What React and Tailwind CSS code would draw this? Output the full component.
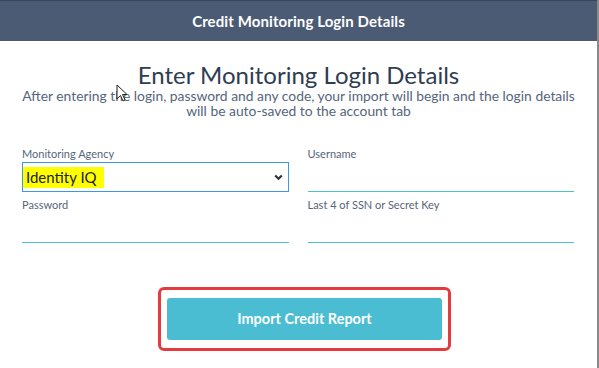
import React from "react";

export default function App() {
  return (
    <div className="w-[599px] h-[368px] bg-[#8a8a8a] overflow-hidden" style={{ fontFamily: "Lato, 'Noto Sans', sans-serif" }}>
      <div className="relative w-[597px] h-[368px] bg-white">
        <div className="h-[41px] bg-[#4a5b73] border-t border-[#3a4658] flex items-center justify-center">
          <span className="text-white font-bold text-[15px] tracking-[0.1px]">Credit Monitoring Login Details</span>
        </div>
        <div className="pt-[20px] flex flex-col items-center">
          <h1 className="text-[24px] leading-[27px] text-[#2e3d52]">Enter Monitoring Login Details</h1>
          <p className="text-[13.85px] leading-[15px] text-[#55657b] text-center px-[12px]">
            After entering the login, password and any code, your import will begin and the login details will be auto-saved to the account tab
          </p>
        </div>
        <div className="grid grid-cols-2 gap-x-[19px] pl-[22px] pr-[23px] mt-[29px]">
          <div>
            <div className="text-[11px] leading-[14px] text-[#56657a]">Monitoring Agency</div>
            <div className="mt-[1px] h-[30px] border border-[#3d97e3] flex items-center justify-between pr-[5px]">
              <span className="bg-[#ffff00] text-[#222] text-[15px] leading-[21px] pl-[3px] pr-[7px]">Identity IQ</span>
              <svg width="9" height="7" viewBox="0 0 9 7">
                <path d="M1.2 1.5 L4.5 4.8 L7.8 1.5" stroke="#333" strokeWidth="2.2" fill="none" />
              </svg>
            </div>
          </div>
          <div>
            <div className="text-[11px] leading-[14px] text-[#56657a]">Username</div>
            <div className="mt-[1px] h-[30px] border-b border-[#4bc0d0]" />
          </div>
          <div className="mt-[6px]">
            <div className="text-[11px] leading-[14px] text-[#56657a]">Password</div>
            <div className="h-[31px] border-b border-[#4bc0d0]" />
          </div>
          <div className="mt-[6px]">
            <div className="text-[11px] leading-[14px] text-[#56657a]">Last 4 of SSN or Secret Key</div>
            <div className="h-[31px] border-b border-[#4bc0d0]" />
          </div>
        </div>
        <div className="flex justify-center mt-[44px] pl-[12px]">
          <div className="w-[293px] h-[64px] border-[3px] border-[#e53b3f] rounded-[6px] flex items-center justify-center">
            <button className="w-[275px] h-[42px] bg-[#4abdd2] rounded-[3px] text-white font-bold text-[14.5px]">Import Credit Report</button>
          </div>
        </div>
        <svg className="absolute left-[116px] top-[84px]" width="14" height="20" viewBox="0 0 14 20">
          <path d="M1 1 L1 15 L4.5 11.5 L7 17 L9 16 L6.5 10.5 L11 10.5 Z" fill="white" stroke="#222" strokeWidth="1" strokeLinejoin="round" />
        </svg>
      </div>
    </div>
  );
}
